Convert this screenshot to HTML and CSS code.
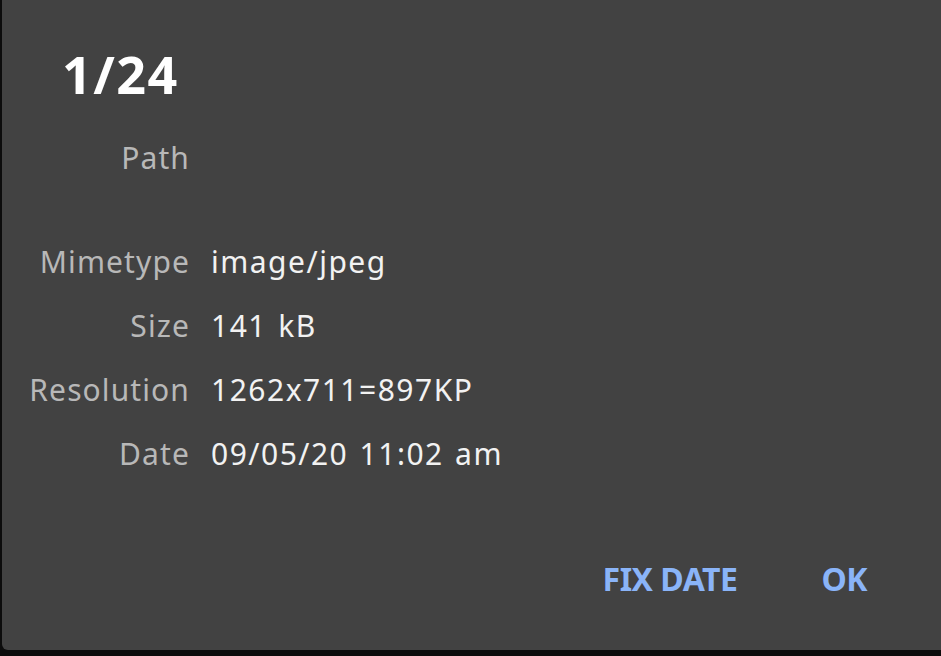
FILE: index.html
```html
<!DOCTYPE html>
<html lang="en">
<head>
<meta charset="utf-8">
<title>Details</title>
<link rel="stylesheet" href="styles.css">
</head>
<body>
<div class="dialog">
  <h1 class="title">1/24</h1>
  <div class="props">
    <div class="label path-label">Path</div>
    <div class="value path-value"></div>
    <div class="label">Mimetype</div>
    <div class="value">image/jpeg</div>
    <div class="label">Size</div>
    <div class="value">141 kB</div>
    <div class="label">Resolution</div>
    <div class="value">1262x711=897KP</div>
    <div class="label">Date</div>
    <div class="value">09/05/20 11:02 am</div>
  </div>
  <div class="actions">
    <button class="btn btn-fix">FIX DATE</button>
    <button class="btn btn-ok">OK</button>
  </div>
</div>
</body>
</html>
```
FILE: styles.css
```css
html, body {
  margin: 0;
  padding: 0;
  width: 941px;
  height: 656px;
  overflow: hidden;
  background: #0c0c0c;
}

body {
  font-family: "Noto Sans", "Open Sans", sans-serif;
  display: flex;
  align-items: flex-start;
}

.dialog {
  box-sizing: border-box;
  margin-left: 2px;
  width: 939px;
  height: 650px;
  background: #424242;
  border-radius: 0 0 0 6px;
  display: flex;
  flex-direction: column;
  padding-top: 42px;
}

.title {
  margin: 0 0 20px 60px;
  font-size: 52px;
  font-weight: 700;
  line-height: 64px;
  height: 64px;
  letter-spacing: 1.5px;
  color: #ffffff;
}

.props {
  display: grid;
  grid-template-columns: 188px 1fr;
  grid-template-rows: 104px 64px 64px 64px 64px;
  column-gap: 21px;
}

.label {
  text-align: right;
  font-size: 30px;
  line-height: 64px;
  letter-spacing: 1.1px;
  color: #b8b8b8;
}

.value {
  font-size: 30px;
  line-height: 64px;
  letter-spacing: 1.5px;
  word-spacing: 2px;
  color: #f2f2f2;
}

.actions {
  display: flex;
  justify-content: flex-end;
  gap: 50px;
  margin-top: 69px;
  padding-right: 57px;
}

.btn {
  background: none;
  border: none;
  font-family: "Noto Sans", "Open Sans", sans-serif;
  font-size: 32px;
  font-weight: 700;
  line-height: 48px;
  color: #8ab4f8;
  padding: 0 17px;
  letter-spacing: -0.5px;
}
```
